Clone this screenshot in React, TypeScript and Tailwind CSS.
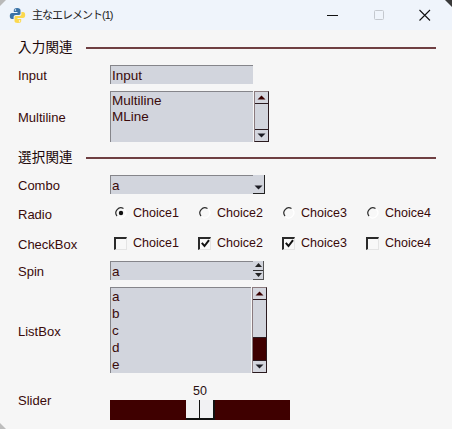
import React from "react";

const font = { fontFamily: '"Liberation Sans", "Noto Sans CJK JP", sans-serif' };

function Up() {
  return <svg width="9" height="5" viewBox="0 0 9 5"><path d="M4.5 0.5 L8.5 4.5 H0.5 Z" fill="#3b0000" /></svg>;
}
function Down() {
  return <svg width="9" height="5" viewBox="0 0 9 5"><path d="M0.5 0.5 H8.5 L4.5 4.5 Z" fill="#1c1c24" /></svg>;
}

function ScrollBtn({ dir }: { dir: "up" | "down" }) {
  return (
    <div className="h-[11px] shrink-0 flex items-center justify-center bg-[#d4d6de] border-[#2a1a1f]">
      {dir === "up" ? <Up /> : <Down />}
    </div>
  );
}

function Section({ title }: { title: string }) {
  return (
    <div className="h-[20px] flex items-center">
      <span className="w-[68px] text-[13.5px] leading-none text-[#1c0808] tracking-[0.2px]">{title}</span>
      <div className="w-[350px] h-[2px] bg-[#6f3f42]" />
    </div>
  );
}

function Label({ children }: { children: React.ReactNode }) {
  return <span className="w-[92px] shrink-0 pt-[2px] text-[13px] leading-none text-[#3a0a0a]">{children}</span>;
}

function Field({ value, width }: { value: string; width: string }) {
  return (
    <div className={`${width} h-[19px] bg-[#d2d5dd] border-t border-l border-[#85858a] text-[13.5px] leading-[20px] pl-[1px] text-[#3a0a0a]`}>
      {value}
    </div>
  );
}

function Radio({ on }: { on?: boolean }) {
  return (
    <svg width="14" height="14" viewBox="0 0 14 14" className="shrink-0">
      <circle cx="7" cy="7" r="5.5" fill="#f8f8f8" />
      <path d="M3 10 A5 5 0 0 1 9.5 2.6" fill="none" stroke="#2c2c2c" strokeWidth="1.2" />
      <path d="M10.5 3.5 A5 5 0 0 1 4 11" fill="none" stroke="#ffffff" strokeWidth="1.2" />
      {on && <circle cx="7" cy="7" r="2.2" fill="#111" />}
    </svg>
  );
}

function Check({ on }: { on?: boolean }) {
  return (
    <div className="w-[13px] h-[13px] shrink-0 bg-[#f8f8f8] border-t-2 border-l-2 border-[#2a2a2a] border-r border-b border-r-[#e4e4e4] border-b-[#e4e4e4] flex items-center justify-center">
      {on && (
        <svg width="9" height="9" viewBox="0 0 9 9"><path d="M0.8 3.8 L3.5 7 L8 1.2" fill="none" stroke="#111" strokeWidth="2" /></svg>
      )}
    </div>
  );
}

function Choice({ n, gap, children }: { n: number; gap: string; children: React.ReactNode }) {
  return (
    <div className={`w-[84px] flex items-center pl-[4px] ${gap}`}>
      {children}
      <span className="text-[12.5px] leading-none text-[#3a0a0a]">Choice{n}</span>
    </div>
  );
}

function Scrollbar({ children }: { children: React.ReactNode }) {
  return (
    <div className="w-[15px] h-full flex flex-col bg-[#d2d5dd] border border-[#2a1a1f] border-t-[#8a7a7e] border-l-[#8a7a7e]">
      <div className="border-b border-[#2a1a1f]"><ScrollBtn dir="up" /></div>
      {children}
      <div className="border-t border-[#2a1a1f]"><ScrollBtn dir="down" /></div>
    </div>
  );
}

function PythonLogo() {
  return (
    <svg width="17" height="17" viewBox="0 0 17 17" className="shrink-0">
      <path d="M8.2 1 C5.5 1 4.8 2 4.8 3.3 V5 H8.5 V6 H3 C1.5 6 0.8 7.2 0.8 9 C0.8 10.8 1.5 12 3 12 H4.6 V10 C4.6 8.6 5.6 7.9 6.8 7.9 H10 C11 7.9 11.5 7.2 11.5 6.3 V3.3 C11.5 2 10.6 1 8.2 1 Z" fill="#3a72a6" />
      <path d="M8.8 16 C11.5 16 12.2 15 12.2 13.7 V12 H8.5 V11 H14 C15.5 11 16.2 9.8 16.2 8 C16.2 6.2 15.5 5 14 5 H12.4 V7 C12.4 8.4 11.4 9.1 10.2 9.1 H7 C6 9.1 5.5 9.8 5.5 10.7 V13.7 C5.5 15 6.4 16 8.8 16 Z" fill="#fbd84e" />
      <circle cx="6.4" cy="3" r="0.8" fill="#fff" />
      <circle cx="10.6" cy="14" r="0.8" fill="#fff" />
    </svg>
  );
}

export default function App() {
  return (
    <div className="relative w-[452px] h-[429px] overflow-hidden bg-[#f6f6f6]" style={font}>
      {/* title bar */}
      <div className="h-[30px] bg-[#eff4fb] flex items-center pl-[9px]">
        <PythonLogo />
        <span className="ml-[6px] text-[11px] leading-none text-[#222] tracking-[-1px]">主なエレメント(1)</span>
        <div className="ml-auto flex items-center">
          <svg width="46" height="30" viewBox="0 0 46 30"><path d="M17 15.5 H28" stroke="#111" strokeWidth="1" /></svg>
          <svg width="46" height="30" viewBox="0 0 46 30"><rect x="18.5" y="10.5" width="9" height="9" rx="1" fill="none" stroke="#c4c8ce" /></svg>
          <svg width="46" height="30" viewBox="0 0 46 30" className="mr-[4px]"><path d="M17.5 10 L28 20.5 M28 10 L17.5 20.5" stroke="#111" strokeWidth="1.1" /></svg>
        </div>
      </div>

      <div className="pl-[18px] flex flex-col">
        <div className="mt-[8px]"><Section title="入力関連" /></div>

        <div className="mt-[7px] h-[19px] flex items-center">
          <Label>Input</Label>
          <Field value="Input" width="w-[143px]" />
        </div>

        <div className="mt-[7px] h-[51px] flex items-center">
          <Label>Multiline</Label>
          <div className="w-[143px] h-full bg-[#d2d5dd] border-t border-l border-[#85858a] text-[13.5px] leading-[16px] pl-[1px] pt-[1px] text-[#3a0a0a]">
            <div>Multiline</div>
            <div>MLine</div>
          </div>
          <div className="ml-[1px] h-full"><Scrollbar><div className="flex-1" /></Scrollbar></div>
        </div>

        <div className="mt-[6px]"><Section title="選択関連" /></div>

        <div className="mt-[7px] h-[19px] flex items-center">
          <Label>Combo</Label>
          <Field value="a" width="w-[143px]" />
          <div className="w-[12px] h-full bg-[#d2d5dd] border-r border-b border-[#222] flex items-center justify-center pt-[6px]">
            <Down />
          </div>
        </div>

        <div className="mt-[9px] h-[20px] flex items-center">
          <Label>Radio</Label>
          <Choice n={1} gap="gap-[5px]"><Radio on /></Choice>
          <Choice n={2} gap="gap-[5px]"><Radio /></Choice>
          <Choice n={3} gap="gap-[5px]"><Radio /></Choice>
          <Choice n={4} gap="gap-[5px]"><Radio /></Choice>
        </div>

        <div className="mt-[10px] h-[20px] flex items-center">
          <Label>CheckBox</Label>
          <Choice n={1} gap="gap-[6px]"><Check /></Choice>
          <Choice n={2} gap="gap-[6px]"><Check on /></Choice>
          <Choice n={3} gap="gap-[6px]"><Check on /></Choice>
          <Choice n={4} gap="gap-[6px]"><Check /></Choice>
        </div>

        <div className="mt-[8px] h-[19px] flex items-center">
          <Label>Spin</Label>
          <Field value="a" width="w-[143px]" />
          <div className="w-[11px] h-full flex flex-col bg-[#d2d5dd] border-r border-b border-[#555]">
            <div className="flex-1 flex items-center justify-center border-b border-[#333]">
              <svg width="7" height="4" viewBox="0 0 7 4"><path d="M3.5 0 L7 4 H0 Z" fill="#222" /></svg>
            </div>
            <div className="flex-1 flex items-center justify-center">
              <svg width="7" height="4" viewBox="0 0 7 4"><path d="M0 0 H7 L3.5 4 Z" fill="#222" /></svg>
            </div>
          </div>
        </div>

        <div className="mt-[7px] h-[86px] flex items-center">
          <Label>ListBox</Label>
          <div className="w-[141px] h-full bg-[#d2d5dd] border-t border-l border-[#85858a] text-[13.5px] leading-[17px] pl-[1px] overflow-hidden text-[#3a0a0a]">
            {["a", "b", "c", "d", "e"].map((v) => <div key={v}>{v}</div>)}
          </div>
          <div className="ml-[1px] h-full">
            <Scrollbar>
              <div className="h-[38px] border-b border-[#2a1a1f]" />
              <div className="flex-1 bg-[#3f0000]" />
            </Scrollbar>
          </div>
        </div>

        <div className="mt-[10px] flex items-end h-[37px]">
          <div className="w-[92px] mb-[13px]">
            <span className="block text-[13px] leading-none text-[#3a0a0a]">Slider</span>
          </div>
          <div className="w-[180px] flex flex-col items-center">
            <span className="text-[12.5px] leading-none text-[#2a1010] mb-[3px]">50</span>
            <div className="w-full h-[20px] bg-[#3f0000] flex justify-center">
              <div className="w-[29px] h-full bg-[#f1f1f3] border-b-2 border-b-[#111] border-r-2 border-r-[#111] flex justify-center">
                <div className="w-[1px] h-full bg-[#111]" />
              </div>
            </div>
          </div>
        </div>
      </div>

      {/* window corners */}
      <svg width="8" height="8" viewBox="0 0 8 8" className="absolute top-0 left-0"><path d="M0 0 H6 L0 6 Z" fill="#b9b9b9" /></svg>
      <svg width="8" height="8" viewBox="0 0 8 8" className="absolute top-0 right-0"><path d="M1 0 H8 V7 Z" fill="#3a3a3a" /></svg>
      <svg width="8" height="8" viewBox="0 0 8 8" className="absolute bottom-0 left-0"><path d="M0 2 L6 8 H0 Z" fill="#bdbdbd" /></svg>
    </div>
  );
}
